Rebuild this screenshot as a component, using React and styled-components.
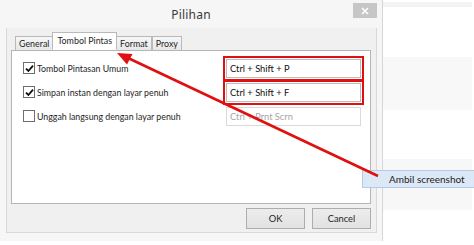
import React from 'react'
import styled, { createGlobalStyle } from 'styled-components'

const GlobalStyle = createGlobalStyle`
  html, body {
    margin: 0;
    padding: 0;
    background: #ffffff;
  }
  body {
    font-family: Lato, "Noto Sans", sans-serif;
    color: #1e1e1e;
  }
`

const shortcuts = [
  { label: 'Tombol Pintasan Umum', keys: 'Ctrl + Shift + P', checked: true, marked: true },
  { label: 'Simpan instan dengan layar penuh', keys: 'Ctrl + Shift + F', checked: true, marked: true },
  { label: 'Unggah langsung dengan layar penuh', keys: 'Ctrl + Prnt Scrn', checked: false, dim: true },
]

const tabs = ['General', 'Tombol Pintas', 'Format', 'Proxy']

function CheckIcon() {
  return (
    <svg width="9" height="9" viewBox="0 0 9 9">
      <path d="M1 4.6 L3.4 7 L8 1.6" fill="none" stroke="#111" strokeWidth="1.8" />
    </svg>
  )
}

function App() {
  return (
    <Page>
      <GlobalStyle />
      <Window>
        <TitleBar>
          <span />
          <Title>Pilihan</Title>
          <CloseButton>
            <svg width="8" height="8" viewBox="0 0 8 8">
              <path d="M1 1 L7 7 M7 1 L1 7" stroke="#fff" strokeWidth="1.6" />
            </svg>
          </CloseButton>
        </TitleBar>
        <Client>
          <TabRow>
            {tabs.map((t, i) => (
              <Tab key={t} active={i === 1}>{t}</Tab>
            ))}
          </TabRow>
          <Panel>
            {shortcuts.map((s) => (
              <Row key={s.label}>
                <CheckLabel>
                  <Box>{s.checked && <CheckIcon />}</Box>
                  {s.label}
                </CheckLabel>
                <KeyField marked={s.marked} dim={s.dim}>{s.keys}</KeyField>
              </Row>
            ))}
          </Panel>
          <ButtonRow>
            <Button>OK</Button>
            <Button>Cancel</Button>
          </ButtonRow>
        </Client>
      </Window>
      <Backdrop>
        <Band h={2} />
        <Band h={5} shade="#f3f3f3" />
        <Band h={50} />
        <Band h={53} shade="#f8f8f8" />
        <Band h={49} />
        <Band h={51} shade="#f7f7f7" />
      </Backdrop>
      <MenuItem>Ambil screenshot</MenuItem>
      <Arrow width="474" height="245" viewBox="0 0 474 245">
        <line x1="378" y1="176" x2="128" y2="58" stroke="#e01010" strokeWidth="2.6" />
        <polygon points="117,53 132.5,54 127,64.5" fill="#e01010" />
      </Arrow>
    </Page>
  )
}

export default App

const Page = styled.div`
  position: relative;
  width: 474px;
  height: 245px;
  overflow: hidden;
  display: flex;
  align-items: flex-start;
`

const Window = styled.div`
  width: 382px;
  height: 241px;
  flex: none;
  background: #f6f6f6;
  border-right: 1px solid #d6d6d6;
  display: flex;
  flex-direction: column;
`

const TitleBar = styled.div`
  height: 28px;
  display: grid;
  grid-template-columns: 1fr auto 1fr;
  align-items: start;
`

const Title = styled.div`
  font-family: "Noto Sans", sans-serif;
  font-size: 12px;
  color: #3a3a3a;
  padding-top: 6px;
  letter-spacing: 0.2px;
`

const CloseButton = styled.div`
  justify-self: end;
  margin: 3px 5px 0 0;
  width: 24px;
  height: 15px;
  background: #c6c6c6;
  display: flex;
  align-items: center;
  justify-content: center;
`

const Client = styled.div`
  margin: 0 5px 0 6px;
  height: 205px;
  background: #f0f0f0;
  border: 1px solid #d9d9d9;
  border-top: none;
  padding: 5px 5px 0 4px;
  box-sizing: border-box;
  display: flex;
  flex-direction: column;
`

const TabRow = styled.div`
  display: flex;
  align-items: flex-end;
  height: 17px;
  padding-left: 4px;
  position: relative;
  z-index: 1;
`

const Tab = styled.div`
  font-size: 8.9px;
  height: ${(p) => (p.active ? '18px' : '14px')};
  line-height: ${(p) => (p.active ? '15px' : '14px')};
  padding: 0 ${(p) => (p.active ? '4px' : '3px')};
  margin: 0 ${(p) => (p.active ? '-1px' : '0')};
  background: ${(p) => (p.active ? '#ffffff' : 'linear-gradient(#f6f6f6, #e8e8e8)')};
  border: 1px solid #b9b9b9;
  border-bottom: ${(p) => (p.active ? '1px solid #ffffff' : 'none')};
  box-sizing: border-box;
  color: #1e1e1e;
  position: relative;
  z-index: ${(p) => (p.active ? 2 : 1)};
`

const Panel = styled.div`
  height: 154px;
  background: #ffffff;
  border: 1px solid #b4b4b4;
  box-sizing: border-box;
  padding: 5px 9px 0 11px;
  display: flex;
  flex-direction: column;
`

const Row = styled.div`
  height: 24px;
  display: flex;
  align-items: center;
  justify-content: space-between;
`

const CheckLabel = styled.div`
  display: flex;
  align-items: center;
  gap: 2px;
  font-size: 8.8px;
  color: #1e1e1e;
`

const Box = styled.div`
  width: 10px;
  height: 10px;
  border: 1px solid #6f6f6f;
  background: #fff;
  display: flex;
  align-items: center;
  justify-content: center;
`

const KeyField = styled.div`
  width: 135px;
  height: 19px;
  box-sizing: border-box;
  border: 1px solid ${(p) => (p.dim ? '#dadada' : '#bdbdbd')};
  padding-left: 3px;
  font-size: 9.3px;
  line-height: 17px;
  color: ${(p) => (p.dim ? '#a6a6a6' : '#111')};
  outline: ${(p) => (p.marked ? '2.5px solid #e01010' : 'none')};
  outline-offset: 1px;
`

const ButtonRow = styled.div`
  display: flex;
  justify-content: flex-end;
  gap: 7px;
  padding-top: 4px;
`

const Button = styled.div`
  width: 59px;
  height: 21px;
  box-sizing: border-box;
  background: linear-gradient(#ececec, #e2e2e2);
  border: 1px solid #adadad;
  font-size: 9.3px;
  line-height: 19px;
  text-align: center;
  color: #1e1e1e;
`

const Backdrop = styled.div`
  flex: 1;
  display: flex;
  flex-direction: column;
  padding-right: 2px;
`

const Band = styled.div`
  height: ${(p) => p.h}px;
  background: ${(p) => p.shade || '#ffffff'};
`

const MenuItem = styled.div`
  position: absolute;
  left: 362px;
  top: 170px;
  width: 112px;
  height: 18px;
  box-sizing: border-box;
  background: #dce8f5;
  border: 1px solid #b3cbe6;
  border-right: none;
  padding-left: 26px;
  font-size: 10px;
  line-height: 16px;
  color: #222;
`

const Arrow = styled.svg`
  position: absolute;
  left: 0;
  top: 0;
  pointer-events: none;
`
